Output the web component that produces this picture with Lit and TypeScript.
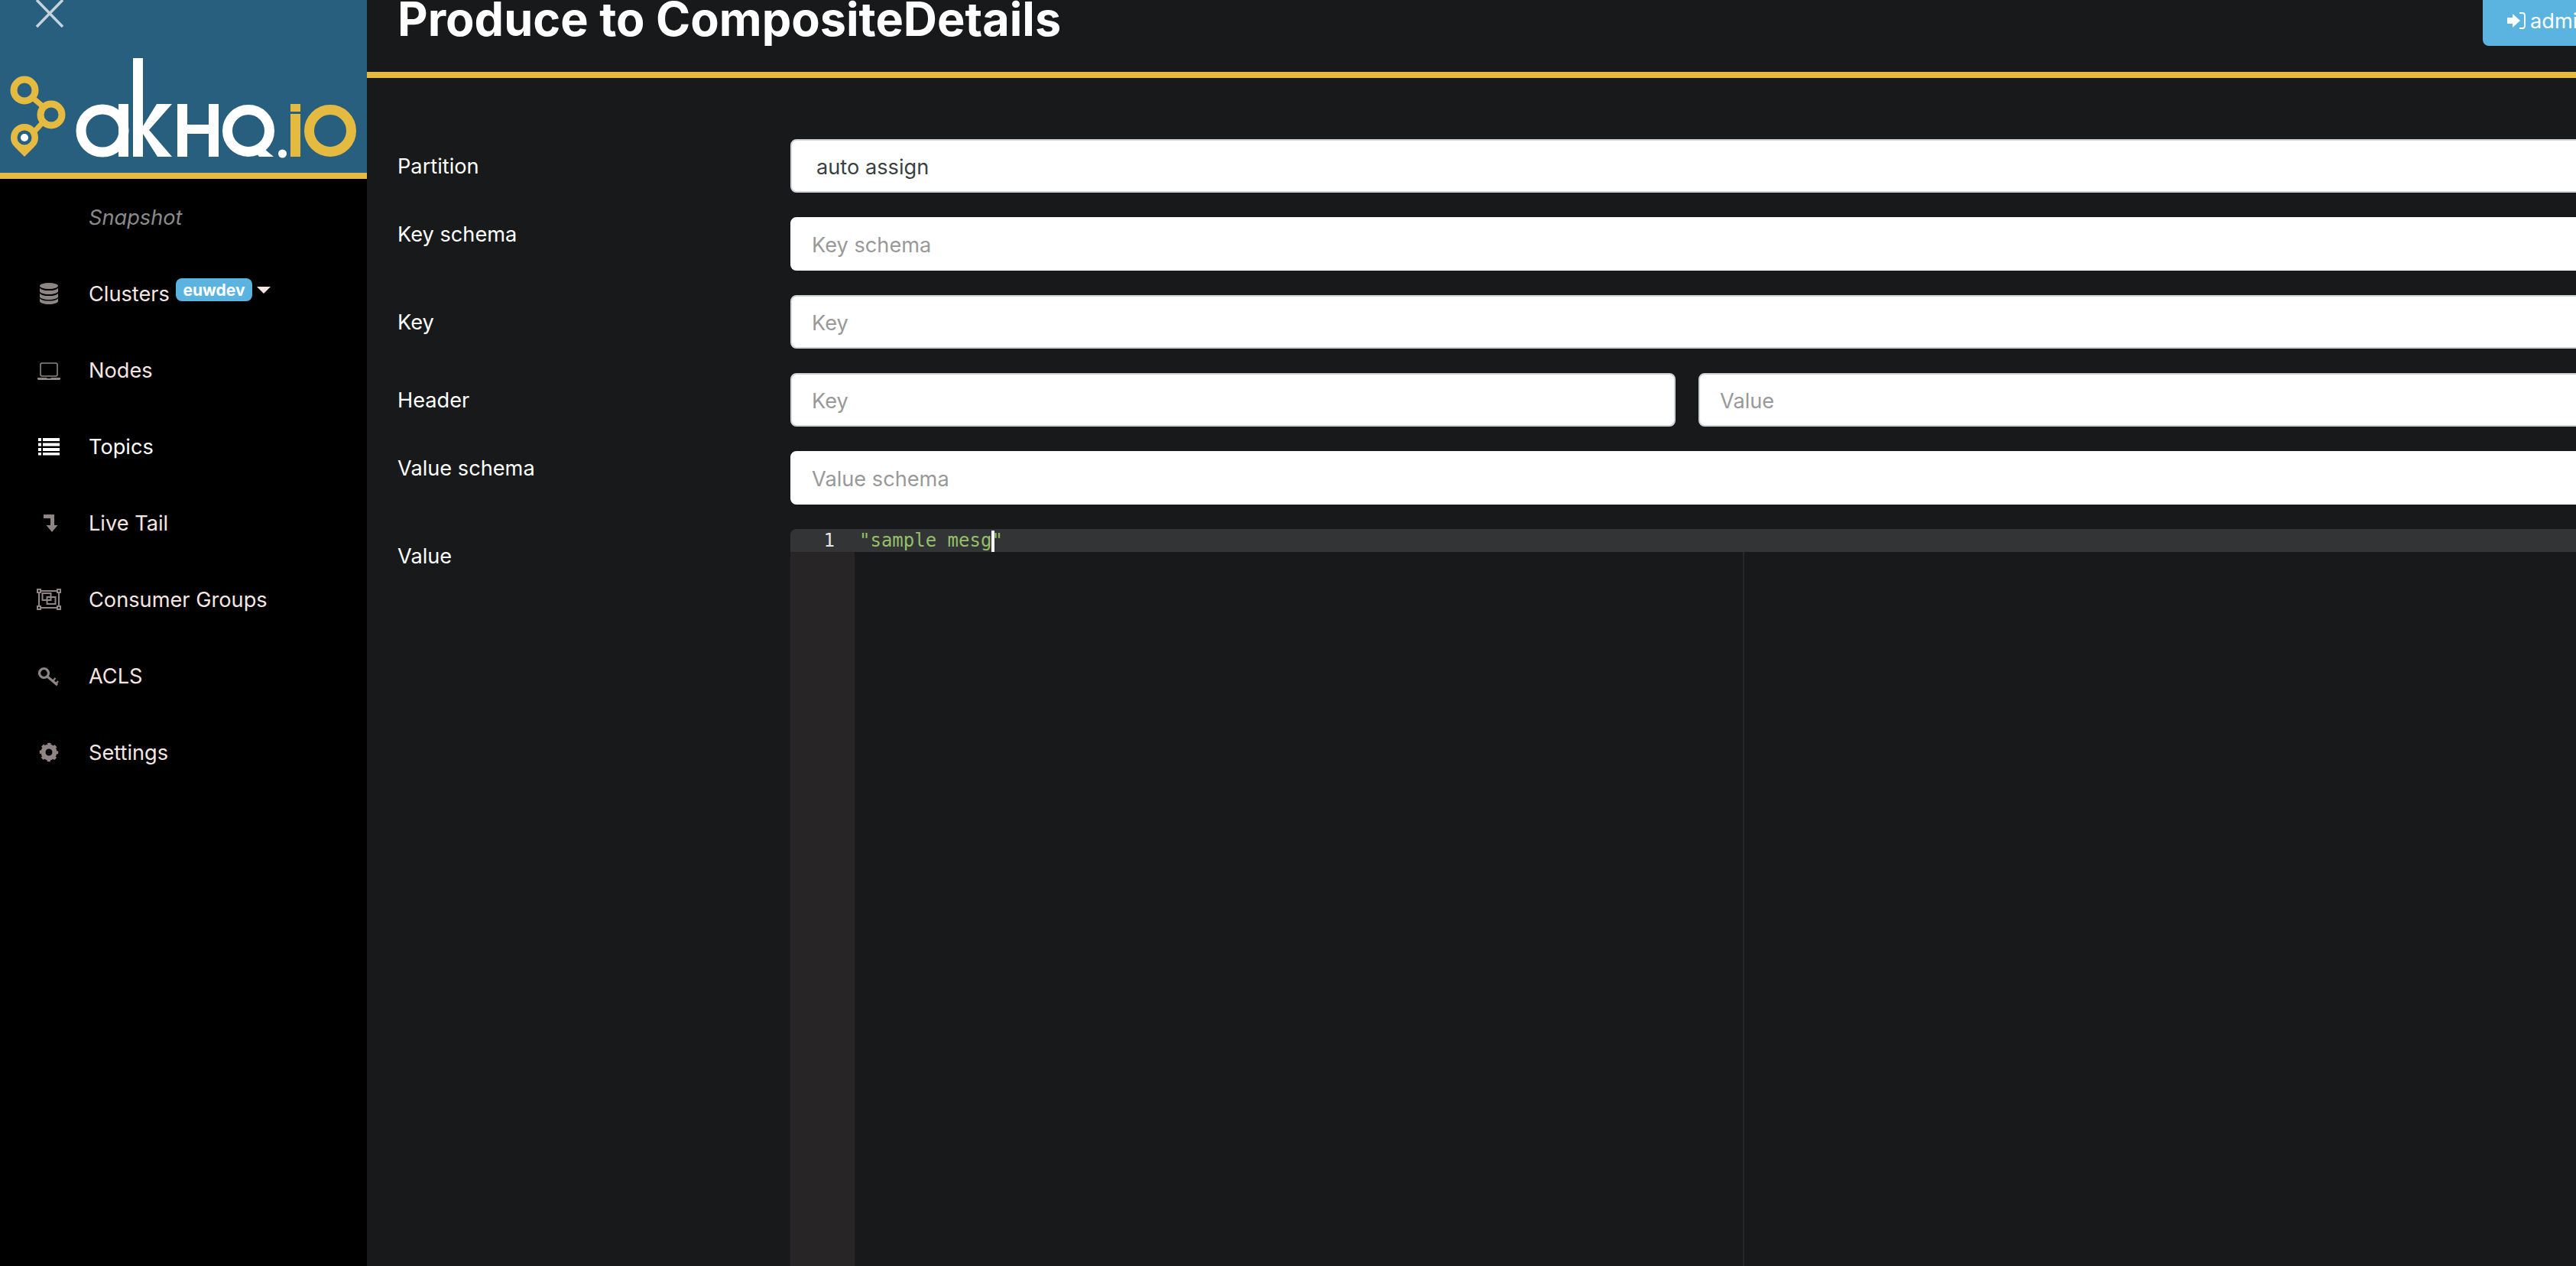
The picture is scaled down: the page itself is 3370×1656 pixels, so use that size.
import { LitElement, html, css, svg } from "lit";
import { customElement } from "lit/decorators.js";

const icons: Record<string, unknown> = {
  db: svg`<ellipse cx="16" cy="6" rx="12" ry="4"/><path d="M4 8.5c1.5 2.6 6.5 3.6 12 3.6s10.500-1 12-3.600v4.500c0 2.200-5.400 4-12 4s-12-1.800-12-4z"/><path d="M4 15.500c1.500 2.600 6.500 3.600 12 3.600s10.500-1 12-3.600v4.500c0 2.200-5.400 4-12 4s-12-1.800-12-4z"/><path d="M4 22c1.500 2.600 6.500 3.600 12 3.600s10.500-1 12-3.600v4c0 2.200-5.400 4-12 4s-12-1.800-12-4z"/>`,
  laptop: svg`<rect x="5" y="7" width="22" height="17" rx="2" fill="none" stroke="currentColor" stroke-width="1.600"/><path d="M1 26h12l1 1h4l1-1h12v1.500a1.500 1.500 0 0 1-1.500 1.500h-27a1.500 1.500 0 0 1-1.500-1.500z"/>`,
  list: svg`<path d="M2 5h4v4H2zM2 11.500h4v4H2zM2 18h4v4H2zM2 24h4v3.500H2zM8 5h22v4H8zM8 11.500h22v4H8zM8 18h22v4H8zM8 24h22v3.500H8z"/>`,
  tail: svg`<path d="M9 5h14v14h4.500l-7.500 9-7.500-9H18V10H9z"/>`,
  group: svg`<g fill="none" stroke="currentColor" stroke-width="2"><rect x="1" y="3" width="4" height="4"/><rect x="27" y="3" width="4" height="4"/><rect x="1" y="25" width="4" height="4"/><rect x="27" y="25" width="4" height="4"/><path d="M5 5h22M5 27h22M3 7v18M29 7v18"/><rect x="7.500" y="8" width="11" height="9"/><rect x="13.500" y="13" width="11" height="9"/></g>`,
  key: svg`<circle cx="9.500" cy="12.500" r="6" fill="none" stroke="currentColor" stroke-width="3.200"/><path d="M14 17l13 11" fill="none" stroke="currentColor" stroke-width="3.200"/><path d="M21 23l3.500-4M25 26.500l3-3.500" fill="none" stroke="currentColor" stroke-width="2.200"/>`,
  cog: svg`<circle cx="16" cy="16" r="7.500" fill="none" stroke="currentColor" stroke-width="6"/><circle cx="16" cy="16" r="10.500" fill="none" stroke="currentColor" stroke-width="3.500" stroke-dasharray="4.250 4" stroke-dashoffset="2.100"/>`,
};

const nav = [
  { icon: "db", label: "Clusters", badge: "euwdev" },
  { icon: "laptop", label: "Nodes" },
  { icon: "list", label: "Topics", active: true },
  { icon: "tail", label: "Live Tail" },
  { icon: "group", label: "Consumer Groups" },
  { icon: "key", label: "ACLS" },
  { icon: "cog", label: "Settings" },
];

@customElement("app-root")
export class AppRoot extends LitElement {
  static styles = css`
    :host {
      display: flex;
      width: 100vw;
      height: 100vh;
      overflow: hidden;
      background: #18191b;
      font-family: Inter, "Liberation Sans", sans-serif;
      font-size: 27.2px;
      color: #fff;
    }
    .side {
      flex: none;
      width: 480px;
      box-sizing: border-box;
      background: #000;
      display: flex;
      flex-direction: column;
    }
    .brand {
      height: 226px;
      flex: none;
      background: #285f7e;
      border-bottom: 8px solid #e4ba41;
    }
    .brand svg { display: block; }
    .snapshot {
      height: 100px;
      flex: none;
      display: flex;
      align-items: center;
      padding-left: 116px;
      font-style: italic;
      color: #8a8a8a;
    }
    .item {
      height: 100px;
      flex: none;
      display: flex;
      align-items: center;
      color: #f6e6e3;
    }
    .item.active { color: #fff; }
    .ic {
      width: 32px;
      height: 32px;
      margin: 0 36px 0 48px;
      flex: none;
      fill: currentColor;
      color: #8f8585;
    }
    .item.active .ic { color: #fff; }
    .badge {
      margin-left: 8px;
      margin-top: -10px;
      height: 30px;
      width: 100px;
      border-radius: 8px;
      background: #5bb3e0;
      color: #fff;
      font-size: 21px;
      font-weight: 700;
      display: flex;
      align-items: center;
      justify-content: center;
    }
    .caret {
      margin: -10px 0 0 6px;
      border-left: 9px solid transparent;
      border-right: 9px solid transparent;
      border-top: 9px solid #f6e6e3;
    }
    .main {
      flex: none;
      width: 2900px;
      display: flex;
      flex-direction: column;
    }
    .top {
      height: 94px;
      flex: none;
      border-bottom: 8px solid #e4ba41;
      display: flex;
      align-items: flex-start;
      justify-content: space-between;
      padding-left: 40px;
    }
    h1 {
      margin: 0;
      font-size: 61.2px;
      font-weight: 700;
      line-height: 50px;
      white-space: nowrap;
    }
    .login {
      width: 132px;
      height: 60px;
      box-sizing: border-box;
      border-radius: 0 0 0 8px;
      background: #5bb3e0;
      display: flex;
      align-items: center;
      gap: 6px;
      padding: 0 0 6px 32px;
      overflow: hidden;
      white-space: nowrap;
    }
    .login svg { flex: none; fill: #fff; }
    .form {
      padding: 80px 0 0 40px;
      display: flex;
      flex-direction: column;
      flex: 1;
      min-height: 0;
    }
    .row {
      display: flex;
      height: 70px;
      margin-bottom: 32px;
      flex: none;
    }
    .lab {
      width: 514px;
      flex: none;
      line-height: 72px;
    }
    .lab.up { line-height: 45px; }
    .fields {
      flex: 1;
      display: flex;
      gap: 30px;
    }
    .input {
      flex: 1;
      box-sizing: border-box;
      background: #fff;
      border: 2px solid #ced4da;
      border-radius: 8px;
      display: flex;
      align-items: center;
      padding: 2px 0 0 26px;
      color: #999;
    }
    .input.plain { border-color: #fff; }
    .input.sel { color: #3a3f44; padding-left: 32px; }
    .editor-row {
      display: flex;
      flex: 1;
      min-height: 0;
    }
    .editor {
      flex: 1;
      display: flex;
      border-top-left-radius: 8px;
      overflow: hidden;
      font-family: "DejaVu Sans Mono", monospace;
      font-size: 24px;
      line-height: 30px;
    }
    .gutter {
      width: 84px;
      flex: none;
      background: #272525;
    }
    .num {
      height: 30px;
      background: #333436;
      color: #e6e6e6;
      text-align: right;
      padding-right: 26px;
      box-sizing: border-box;
    }
    .code { flex: 1; display: flex; flex-direction: column; }
    .line {
      height: 30px;
      flex: none;
      background: #333436;
      padding-left: 6px;
      color: #93c069;
      white-space: pre;
      display: flex;
    }
    .cursor {
      width: 4px;
      margin-right: -4px;
      background: #fff;
      height: 28px;
      margin-top: 2px;
    }
    .margin-wrap { flex: 1; padding-left: 1162px; }
    .print { width: 2px; height: 100%; background: #272727; }
  `;

  render() {
    return html`
      <aside class="side">
        <div class="brand">
          <svg width="480" height="226" viewBox="0 0 480 226" role="img" aria-label="akhq.io">
            <title>akhq.io</title>
            <path d="M48 0l34 35M82 0L48 35" stroke="#fff" stroke-opacity=".72" stroke-width="3.500" fill="none"/>
            <g fill="none" stroke="#e4ba41">
              <circle cx="32" cy="118" r="14" stroke-width="9"/>
              <circle cx="67" cy="150" r="14" stroke-width="9"/>
              <path d="M44 129l13 11M56 160l-10 11" stroke-width="7"/>
            </g>
            <path d="M14 180a18 18 0 0 1 36 0c0 6-3 10-6 13l-12 12-12-12c-3-3-6-7-6-13z" fill="#e4ba41"/>
            <circle cx="32" cy="180" r="9.500" fill="#285f7e"/>
            <circle cx="32" cy="180" r="5" fill="#fff"/>
            <g fill="none" stroke="#fff" stroke-width="13">
              <circle cx="134" cy="171" r="28"/>
              <circle cx="325" cy="171" r="27.500"/>
            </g>
            <g fill="#fff">
              <rect x="155" y="136" width="13" height="69"/>
              <rect x="174" y="76" width="13" height="129"/>
              <path d="M187 165l18-29h20l-30 34 30 35h-19l-19-30z"/>
              <rect x="232" y="136" width="13" height="69"/>
              <rect x="273" y="136" width="13" height="69"/>
              <rect x="245" y="163" width="28" height="12"/>
              <path d="M331 194l9-4 18 15h-19z"/>
              <circle cx="369.500" cy="201" r="5.500"/>
            </g>
            <g fill="#e4ba41">
              <rect x="380" y="136" width="13" height="10"/>
              <rect x="380" y="149" width="13" height="56"/>
            </g>
            <circle cx="432" cy="171" r="27.500" fill="none" stroke="#e4ba41" stroke-width="13"/>
          </svg>
        </div>
        <div class="snapshot">Snapshot</div>
        ${nav.map(
          (n) => html`
            <div class="item ${n.active ? "active" : ""}">
              <svg class="ic" viewBox="0 0 32 32">${icons[n.icon]}</svg>
              <span>${n.label}</span>
              ${n.badge
                ? html`<span class="badge">${n.badge}</span><span class="caret"></span>`
                : ""}
            </div>
          `
        )}
      </aside>
      <main class="main">
        <header class="top">
          <h1>Produce to CompositeDetails</h1>
          <div class="login">
            <svg width="24" height="22" viewBox="0 0 24 22">
              <path d="M0 7h7V2l10 9-10 9v-5H0z"/>
              <path d="M16 1h4a3 3 0 0 1 3 3v14a3 3 0 0 1-3 3h-4" fill="none" stroke="#fff" stroke-width="1.800"/>
            </svg>
            <span>admin</span>
          </div>
        </header>
        <section class="form">
          <div class="row">
            <div class="lab">Partition</div>
            <div class="fields"><div class="input sel">auto assign</div></div>
          </div>
          <div class="row">
            <div class="lab up">Key schema</div>
            <div class="fields"><div class="input plain">Key schema</div></div>
          </div>
          <div class="row">
            <div class="lab">Key</div>
            <div class="fields"><div class="input">Key</div></div>
          </div>
          <div class="row">
            <div class="lab">Header</div>
            <div class="fields">
              <div class="input">Key</div>
              <div class="input">Value</div>
            </div>
          </div>
          <div class="row">
            <div class="lab up">Value schema</div>
            <div class="fields"><div class="input plain">Value schema</div></div>
          </div>
          <div class="editor-row">
            <div class="lab">Value</div>
            <div class="editor">
              <div class="gutter"><div class="num">1</div></div>
              <div class="code">
                <div class="line">"sample mesg<span class="cursor"></span>"</div>
                <div class="margin-wrap"><div class="print"></div></div>
              </div>
            </div>
          </div>
        </section>
      </main>
    `;
  }
}
